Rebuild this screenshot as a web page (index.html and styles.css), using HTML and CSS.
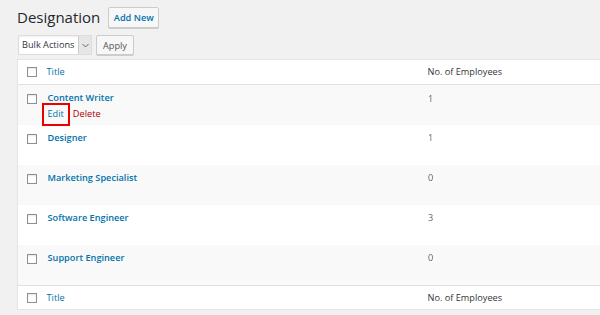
FILE: index.html
```html
<!DOCTYPE html>
<html lang="en">
<head>
  <meta charset="UTF-8">
  <title>Designation</title>
  <link rel="stylesheet" href="styles.css">
</head>
<body>
  <div class="wrap">
    <div class="page-head">
      <h1>Designation</h1>
      <a href="#" class="btn btn-add">Add New</a>
    </div>

    <div class="bulk-bar">
      <div class="select">
        <span class="select-label">Bulk Actions</span>
        <span class="select-arrow">
          <svg width="7" height="5" viewBox="0 0 7 5"><path d="M0.5 1 L3.5 4 L6.5 1" fill="none" stroke="#666" stroke-width="1"/></svg>
        </span>
      </div>
      <button class="btn btn-apply">Apply</button>
    </div>

    <table class="list">
      <colgroup>
        <col class="col-cb">
        <col class="col-title">
        <col>
      </colgroup>
      <thead>
        <tr>
          <th class="cb"><input type="checkbox"></th>
          <th><a href="#">Title</a></th>
          <th>No. of Employees</th>
        </tr>
      </thead>
      <tbody>
        <tr>
          <td class="cb"><input type="checkbox"></td>
          <td>
            <a href="#" class="name">Content Writer</a>
            <div class="row-actions">
              <a href="#" class="edit marked">Edit</a>
              <a href="#" class="delete">Delete</a>
            </div>
          </td>
          <td class="count">1</td>
        </tr>
        <tr>
          <td class="cb"><input type="checkbox"></td>
          <td><a href="#" class="name">Designer</a><div class="row-actions">&nbsp;</div></td>
          <td class="count">1</td>
        </tr>
        <tr>
          <td class="cb"><input type="checkbox"></td>
          <td><a href="#" class="name">Marketing Specialist</a><div class="row-actions">&nbsp;</div></td>
          <td class="count">0</td>
        </tr>
        <tr>
          <td class="cb"><input type="checkbox"></td>
          <td><a href="#" class="name">Software Engineer</a><div class="row-actions">&nbsp;</div></td>
          <td class="count">3</td>
        </tr>
        <tr>
          <td class="cb"><input type="checkbox"></td>
          <td><a href="#" class="name">Support Engineer</a><div class="row-actions">&nbsp;</div></td>
          <td class="count">0</td>
        </tr>
      </tbody>
      <tfoot>
        <tr>
          <th class="cb"><input type="checkbox"></th>
          <th><a href="#">Title</a></th>
          <th>No. of Employees</th>
        </tr>
      </tfoot>
    </table>
  </div>
</body>
</html>
```

FILE: styles.css
```css
body { background: #f1f1f1; color: #444; font-family: "Open Sans", sans-serif; font-size: 9.2px; margin: 0; padding: 0; overflow: hidden; }
a { color: #0073aa; text-decoration: none; }
.wrap { padding: 7px 0 0 17px; }

.page-head { display: flex; align-items: center; gap: 8px; height: 21px; }
.page-head h1 { margin: 0; font-size: 15px; font-weight: 400; line-height: 21px; color: #23282d; }

.btn {
  display: inline-flex;
  align-items: center;
  justify-content: center;
  box-sizing: border-box;
  height: 21px;
  padding: 0;
  border: 1px solid #ccc;
  border-radius: 2px;
  background: #f7f7f7;
  box-shadow: 0 1px 0 #ccc;
  font-family: inherit;
  font-size: 9.2px;
  white-space: nowrap;
}
.btn-add { width: 51px; font-weight: 600; color: #0073aa; }

.bulk-bar { display: flex; align-items: center; gap: 4px; margin-top: 7px; height: 20px; }
.select {
  display: flex;
  box-sizing: border-box;
  height: 20px;
  width: 74px;
  margin-left: 1px;
  border: 1px solid #ddd;
  background: #fff;
  box-shadow: inset 0 1px 2px rgba(0,0,0,0.07);
}
.select-label { flex: 1; padding-left: 3px; line-height: 18px; color: #32373c; }
.select-arrow { display: flex; align-items: center; justify-content: center; width: 12px; background: #e6e6e6; border-left: 1px solid #ccc; }
.btn-apply { height: 20px; width: 38px; color: #555; }

.list {
  margin-top: 4px;
  width: 583px;
  table-layout: fixed;
  border-collapse: collapse;
  background: #fff;
  border: 1px solid #e5e5e5;
  border-right: none;
  box-shadow: 0 1px 1px rgba(0,0,0,0.04);
}
.col-cb { width: 22px; }
.col-title { width: 380px; }
.list th, .list td { box-sizing: border-box; text-align: left; vertical-align: top; font-weight: 400; line-height: 16px; padding: 4px 8px 3px; color: #32373c; }
.list td { color: #555; }
.list thead th { border-bottom: 1px solid #e1e1e1; padding-bottom: 4px; }
.list tfoot th { border-top: 1px solid #e1e1e1; padding-top: 4px; padding-bottom: 3px; }
.list th a { margin-left: -1px; }
.list tbody td { padding-top: 5px; padding-bottom: 3px; height: 40px; }
.list tbody tr:nth-child(odd) { background: #f9f9f9; }
.list .cb { padding-left: 9px; padding-right: 0; }
.list .count { color: #666; will-change: transform; }

input[type=checkbox] {
  appearance: none;
  display: block;
  box-sizing: border-box;
  width: 10px;
  height: 10px;
  margin: 3px 0 0;
  border: 1px solid #8c8f94;
  background: #fff;
  box-shadow: inset 0 1px 2px rgba(0,0,0,0.1);
}
.list tbody input[type=checkbox] { margin-top: 4px; }

.name { font-weight: 600; }
.row-actions { display: flex; gap: 9px; }
.delete { color: #a00; }
.marked { position: relative; }
.marked::after {
  content: "";
  position: absolute;
  left: -6px;
  right: -6px;
  top: -3px;
  bottom: -4px;
  border: 2px solid #e00;
}
```
